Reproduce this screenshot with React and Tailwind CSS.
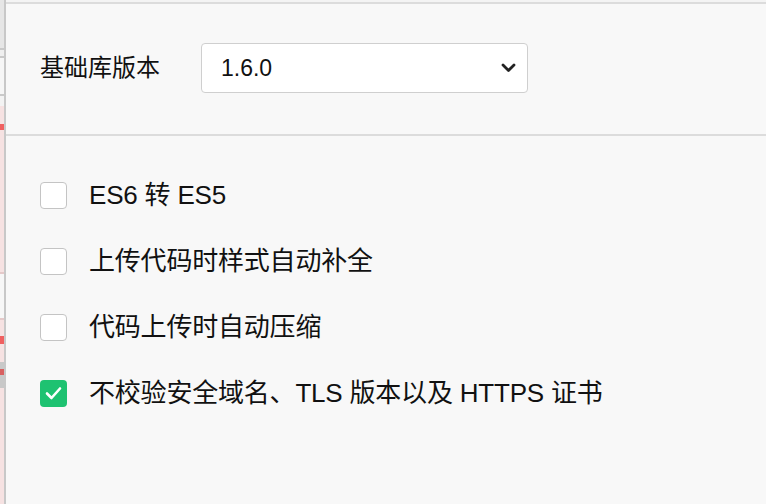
import React, { useState } from 'react';

const font = { fontFamily: '"Liberation Sans", "Noto Sans CJK SC", sans-serif' };

// thin slice of the window behind, visible at the left edge
const Backdrop = () => (
    <div className="w-[4px] shrink-0 flex flex-col">
        <div className="h-[48px] bg-[#e6e6e6]" />
        <div className="h-[2px] bg-[#c9c9c9]" />
        <div className="h-[6px] bg-[#efefef]" />
        <div className="h-[2px] bg-[#c9c9c9]" />
        <div className="h-[36px] bg-[#f6f6f6]" />
        <div className="h-[2px] bg-[#c9c9c9]" />
        <div className="h-[10px] bg-[#f3f3f3]" />
        <div className="h-[18px] bg-[#f6e2e2]" />
        <div className="h-[6px] bg-[#f06060]" />
        <div className="h-[142px] bg-[#f6e2e2]" />
        <div className="h-[2px] bg-[#e5c9c9]" />
        <div className="h-[44px] bg-[#f7f7f7]" />
        <div className="h-[2px] bg-[#e5c9c9]" />
        <div className="h-[16px] bg-[#f6e2e2]" />
        <div className="h-[8px] bg-[#f06060]" />
        <div className="h-[18px] bg-[#f6e2e2]" />
        <div className="h-[7px] bg-[#c8c8c8]" />
        <div className="h-[6px] bg-[#d86060]" />
        <div className="h-[13px] bg-[#c8c8c8]" />
        <div className="flex-1 bg-[#f6e2e2]" />
    </div>
);

const Checkbox = ({ checked, onChange, label }) => (
    <label className="flex items-center h-[66px] cursor-pointer select-none">
        <span
            onClick={onChange}
            className={`w-[27px] h-[27px] rounded-[4px] flex items-center justify-center shrink-0 ${checked ? 'bg-[#1ec271]' : 'bg-white border border-[#c4c4c4]'}`}
        >
            {checked && (
                <svg width="17" height="14" viewBox="0 0 17 14" fill="none">
                    <path d="M2 7.5 L6.5 12 L15 2.5" stroke="white" strokeWidth="2.6" strokeLinecap="round" strokeLinejoin="round" />
                </svg>
            )}
        </span>
        <span className="ml-[22px] text-[26px] text-[#111] leading-none tracking-[-0.2px]">{label}</span>
    </label>
);

const App = () => {
    const [opts, setOpts] = useState([
        { label: 'ES6 转 ES5', checked: false },
        { label: '上传代码时样式自动补全', checked: false },
        { label: '代码上传时自动压缩', checked: false },
        { label: '不校验安全域名、TLS 版本以及 HTTPS 证书', checked: true },
    ]);

    const toggle = (i) => setOpts(prev => prev.map((o, j) => (j === i ? { ...o, checked: !o.checked } : o)));

    return (
        <div className="w-[766px] h-[504px] flex overflow-hidden bg-[#f8f8f8]" style={font}>
            <Backdrop />
            <div className="w-[2px] shrink-0 bg-[#c8c8c8]" />
            <div className="flex-1 flex flex-col">
                <div className="h-[2px] bg-[#f4f4f4]" />
                <div className="h-[2px] bg-[#dcdcdc]" />
                {/* library version */}
                <div className="h-[130px] flex items-center pl-[34px] pb-[2px]">
                    <span className="text-[24px] text-[#111] w-[161px]">基础库版本</span>
                    <div className="w-[327px] h-[50px] bg-white border border-[#cfcfcf] rounded-[4px] flex items-center justify-between pl-[19px] pr-[11px]">
                        <span className="text-[23px] text-[#111]">1.6.0</span>
                        <svg width="15" height="10" viewBox="0 0 15 10" fill="none">
                            <path d="M2 2 L7.5 7.5 L13 2" stroke="#222" strokeWidth="2.8" strokeLinecap="round" strokeLinejoin="round" />
                        </svg>
                    </div>
                </div>
                <div className="h-[2px] bg-[#dcdcdc]" />
                <div className="flex flex-col pl-[34px] pt-[26px]">
                    {opts.map((o, i) => (
                        <Checkbox key={i} label={o.label} checked={o.checked} onChange={() => toggle(i)} />
                    ))}
                </div>
            </div>
        </div>
    );
};

export default App;
